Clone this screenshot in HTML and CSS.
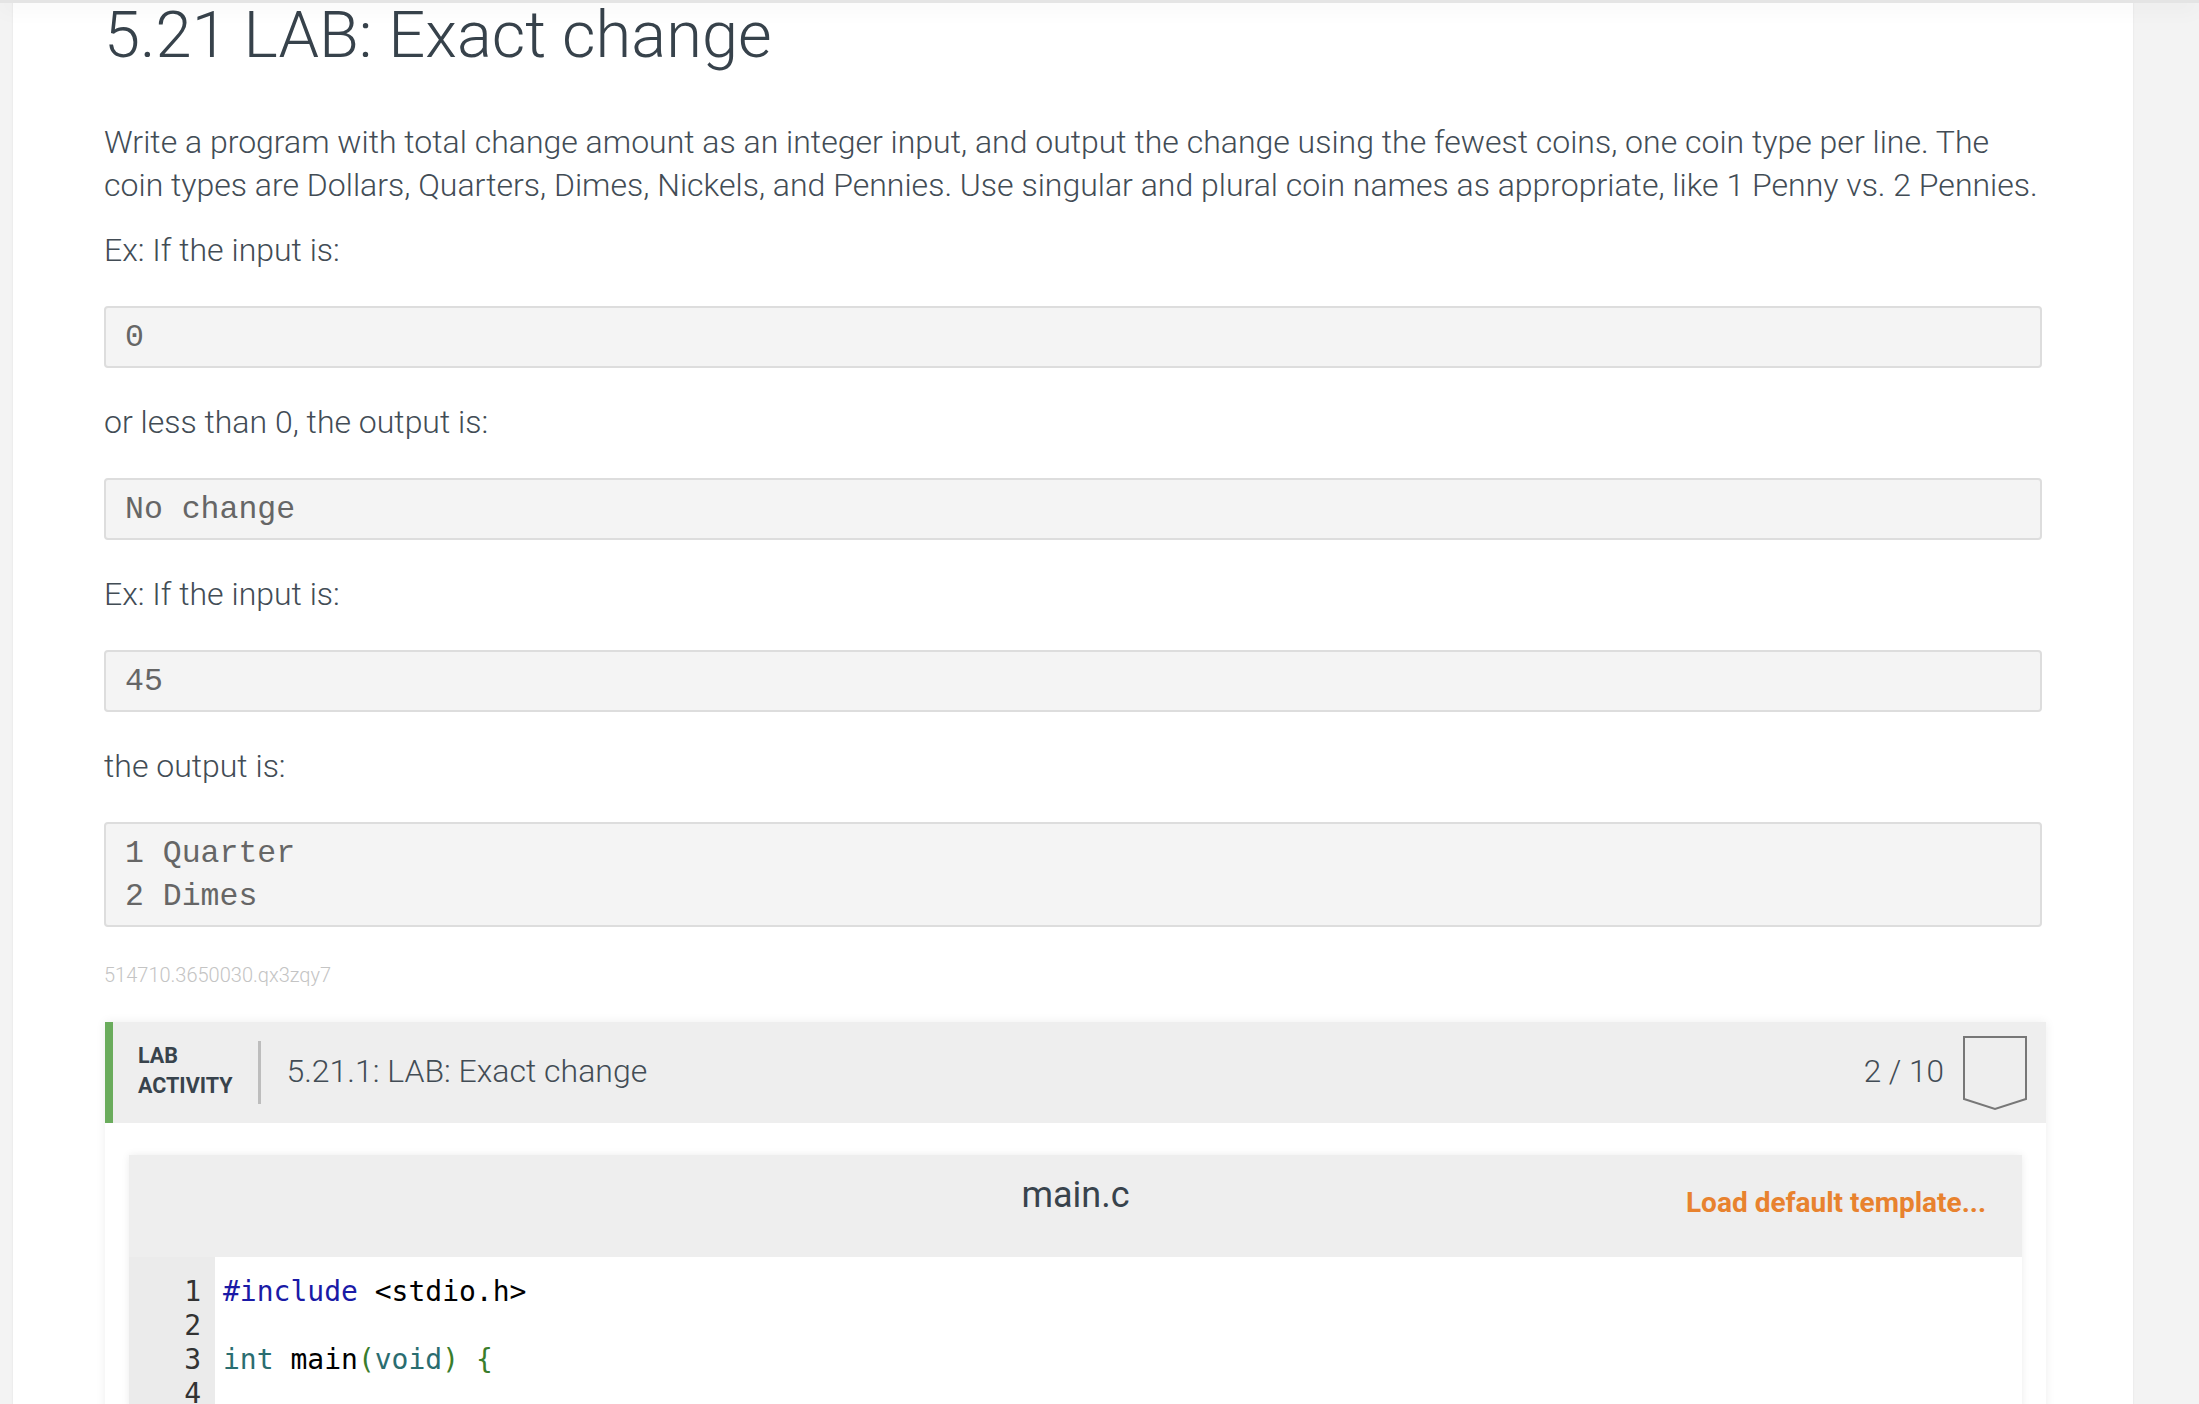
FILE: index.html
```html
<!DOCTYPE html>
<html lang="en">
<head>
<meta charset="utf-8">
<title>5.21 LAB: Exact change</title>
<link rel="stylesheet" href="styles.css">
</head>
<body>
<div class="topbar"></div>
<main class="page">
  <h1 class="title">5.21 LAB: Exact change</h1>
  <p class="text">Write a program with total change amount as an integer input, and output the change using the fewest coins, one coin type per line. The coin types are Dollars, Quarters, Dimes, Nickels, and Pennies. Use singular and plural coin names as appropriate, like 1 Penny vs. 2 Pennies.</p>
  <p class="text">Ex: If the input is:</p>
  <pre class="example">0</pre>
  <p class="text">or less than 0, the output is:</p>
  <pre class="example">No change</pre>
  <p class="text">Ex: If the input is:</p>
  <pre class="example">45</pre>
  <p class="text">the output is:</p>
  <pre class="example">1 Quarter
2 Dimes</pre>
  <div class="resource-id">514710.3650030.qx3zqy7</div>

  <section class="lab">
    <header class="lab-header">
      <div class="lab-label">LAB<br>ACTIVITY</div>
      <div class="lab-sep"></div>
      <div class="lab-title">5.21.1: LAB: Exact change</div>
      <div class="lab-score">2 / 10</div>
      <svg class="lab-badge" width="66" height="76" viewBox="0 0 66 76" aria-hidden="true">
        <path d="M2 2 H64 V64 L33 74 L2 64 Z" fill="none" stroke="#777" stroke-width="2"/>
      </svg>
    </header>
    <div class="lab-body">
      <div class="editor">
        <div class="editor-bar">
          <span class="spacer"></span>
          <span class="filename">main.c</span>
          <span class="load">Load default template...</span>
        </div>
        <div class="code">
          <div class="gutter">
            <div>1</div><div>2</div><div>3</div><div>4</div>
          </div>
          <div class="lines">
            <div class="ln"><span class="tk-meta">#include</span> &lt;stdio.h&gt;</div>
            <div class="ln"> </div>
            <div class="ln"><span class="tk-type">int</span> main<span class="tk-paren">(</span><span class="tk-type">void</span><span class="tk-paren">)</span> <span class="tk-paren">{</span></div>
            <div class="ln"> </div>
          </div>
        </div>
      </div>
    </div>
  </section>
</main>
</body>
</html>
```

FILE: styles.css
```css
html, body {
  margin: 0;
  padding: 0;
}
body {
  background: #f3f3f3;
  overflow: hidden;
  font-family: "Roboto Light", Roboto, "Noto Sans", sans-serif;
  color: #424c55;
}
.topbar {
  position: fixed;
  top: 0;
  left: 0;
  right: 0;
  height: 3px;
  background: #e4e4e4;
  box-shadow: 0 2px 22px rgba(0, 0, 0, 0.16);
  z-index: 5;
}
.page {
  margin: 0 66px 0 13px;
  padding: 0 91px 40px;
  background: #ffffff;
  min-height: 1404px;
  box-shadow: 0 0 2px rgba(0, 0, 0, 0.08);
}
.title {
  margin: 0 0 51px;
  font-size: 65px;
  line-height: 70px;
  font-weight: 300;
  color: #37424b;
}
.text {
  margin: 0 0 22px;
  font-size: 32px;
  line-height: 43px;
  font-weight: 300;
}
.example {
  margin: 34px 0 33px;
  padding: 8px 19px 7px;
  background: #f4f4f4;
  border: 2px solid #dddddd;
  border-radius: 4px;
  font-family: "Liberation Mono", "Courier New", monospace;
  font-size: 31.5px;
  line-height: 43px;
  color: #666666;
  white-space: pre;
}
.resource-id {
  font-size: 20px;
  line-height: 30px;
  font-weight: 300;
  color: #c4c4c4;
}
.lab {
  margin: 32px -4px 0 1px;
  background: #ffffff;
  box-shadow: 0 0 10px rgba(0, 0, 0, 0.07);
}
.lab-header {
  display: flex;
  align-items: center;
  height: 101px;
  background: #eeeeee;
  border-left: 8px solid #6aac5c;
  padding: 0 18px 0 25px;
}
.lab-label {
  font-family: Roboto, "Noto Sans", sans-serif;
  font-size: 21.5px;
  line-height: 30px;
  font-weight: 700;
  color: #38434c;
  margin-top: -4px;
}
.lab-sep {
  width: 3px;
  height: 63px;
  background: #bdbdbd;
  margin: 0 25px 0 26px;
}
.lab-title {
  flex: 1;
  font-size: 32px;
  font-weight: 300;
  color: #424c55;
  margin-top: -3px;
}
.lab-score {
  font-size: 31.5px;
  font-weight: 300;
  color: #424c55;
  margin: -3px 18px 0 0;
}
.lab-badge {
  display: block;
}
.lab-body {
  padding: 32px 24px 40px;
}
.editor {
  box-shadow: 0 0 8px rgba(0, 0, 0, 0.08);
  background: #ffffff;
}
.editor-bar {
  display: grid;
  grid-template-columns: 1fr auto 1fr;
  align-items: start;
  height: 102px;
  background: #eeeeee;
}
.filename {
  font-family: Roboto, "Noto Sans", sans-serif;
  margin-top: 19px;
  font-size: 36px;
  line-height: 42px;
  font-weight: 400;
  color: #38434c;
}
.load {
  font-family: Roboto, "Noto Sans", sans-serif;
  justify-self: end;
  margin: 27px 36px 0 0;
  font-size: 28px;
  line-height: 42px;
  font-weight: 700;
  color: #e8822e;
}
.code {
  display: flex;
  font-family: "DejaVu Sans Mono", monospace;
  font-size: 28px;
  line-height: 34px;
  color: #000000;
}
.gutter {
  width: 86px;
  box-sizing: border-box;
  padding: 18px 14px 0 0;
  background: #ebebeb;
  text-align: right;
  color: #333333;
}
.lines {
  flex: 1;
  padding: 18px 0 0 8px;
}
.ln {
  white-space: pre;
  height: 34px;
}
.tk-meta { color: #1a1aa6; }
.tk-type { color: #2a6d70; }
.tk-paren { color: #3a7d2b; }
```
